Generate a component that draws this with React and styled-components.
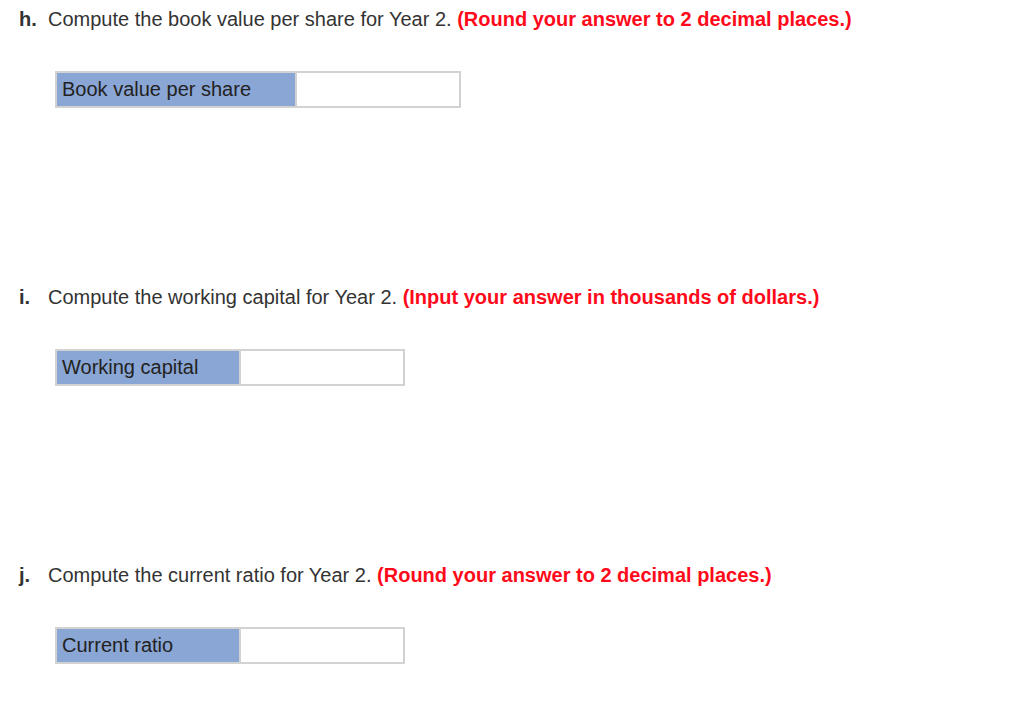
import React from 'react'
import styled, { createGlobalStyle } from 'styled-components'

const Global = createGlobalStyle`
  body {
    margin: 0;
    background: #ffffff;
    font-family: "Liberation Sans", Arial, Helvetica, sans-serif;
    color: #333333;
  }
`

const Page = styled.div`
  display: flex;
  flex-direction: column;
  padding: 8px 0 0 19px;
`

const Part = styled.section`
  display: flex;
  flex-direction: column;
  height: 278px;

  &:last-child {
    height: auto;
  }
`

const Prompt = styled.div`
  display: flex;
  font-size: 20px;
  line-height: 22px;
`

const Letter = styled.span`
  width: 29px;
  font-weight: bold;
`

const Hint = styled.span`
  color: #ff0a1a;
  font-weight: bold;
`

const Answer = styled.div`
  display: flex;
  align-self: flex-start;
  margin: 41px 0 0 36px;
  height: 33px;
  border: 2px solid #d2d2d2;
`

const Label = styled.div`
  width: ${p => p.$w}px;
  background: #8aa6d4;
  display: flex;
  align-items: center;
  padding-left: 5px;
  box-sizing: border-box;
  font-size: 20px;
  color: #222222;
`

const Field = styled.div`
  width: 162px;
  background: #ffffff;
  border-left: 2px solid #d2d2d2;
`

const parts = [
  { letter: 'h.', text: 'Compute the book value per share for Year 2.', hint: '(Round your answer to 2 decimal places.)', label: 'Book value per share', w: 238 },
  { letter: 'i.', text: 'Compute the working capital for Year 2.', hint: '(Input your answer in thousands of dollars.)', label: 'Working capital', w: 182 },
  { letter: 'j.', text: 'Compute the current ratio for Year 2.', hint: '(Round your answer to 2 decimal places.)', label: 'Current ratio', w: 182 },
]

export default function App() {
  return (
    <Page>
      <Global />
      {parts.map(p => (
        <Part key={p.letter}>
          <Prompt>
            <Letter>{p.letter}</Letter>
            <span>{p.text}&nbsp;<Hint>{p.hint}</Hint></span>
          </Prompt>
          <Answer>
            <Label $w={p.w}>{p.label}</Label>
            <Field />
          </Answer>
        </Part>
      ))}
    </Page>
  )
}
